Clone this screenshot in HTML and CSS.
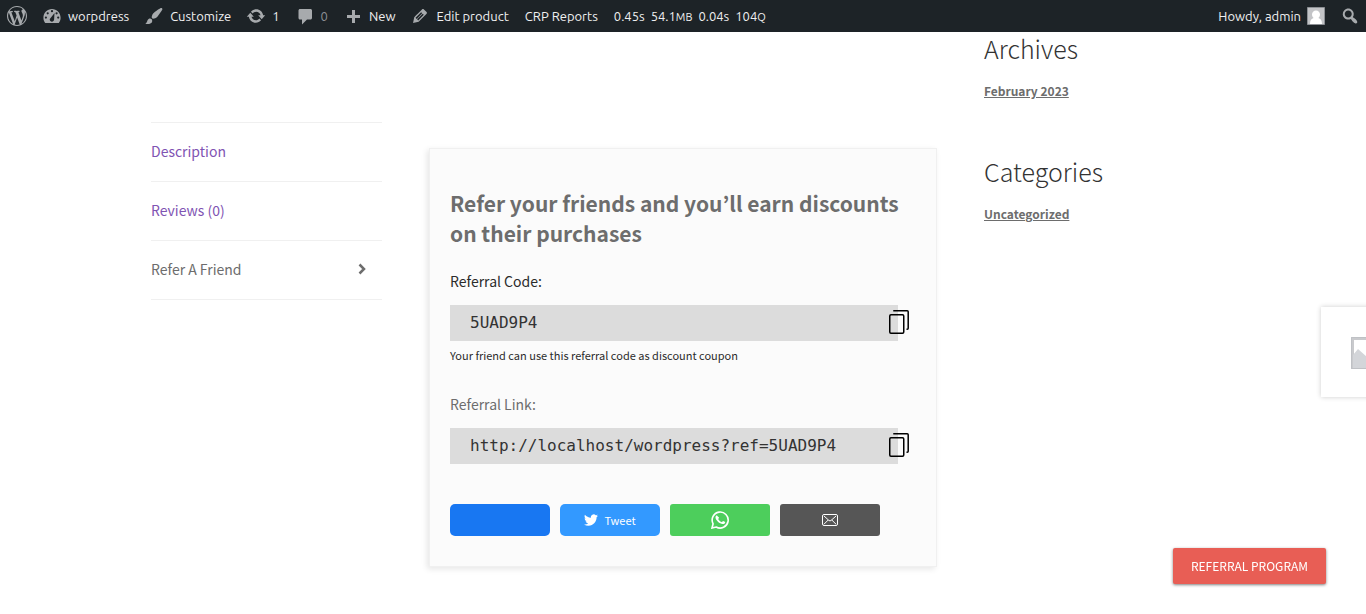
FILE: index.html
```
<!DOCTYPE html>
<html lang="en">
    <head>
        <meta charset="UTF-8" />
        <meta name="viewport" content="width=device-width, initial-scale=1.0" />
        <title>Product | worpdress</title>

        <link rel="stylesheet" href="styles.css">
    </head>
    <body>
        <nav class="adminbar">
            <a class="ab-item" href="#" aria-label="About WordPress">
                <svg class="ab-icon" viewBox="0 0 20 20"><path d="M20 10c0-5.51-4.49-10-10-10C4.48 0 0 4.49 0 10c0 5.52 4.48 10 10 10 5.51 0 10-4.48 10-10zM7.78 15.37L4.37 6.22c.55-.02 1.17-.08 1.17-.08.5-.06.44-1.13-.06-1.11 0 0-1.45.11-2.37.11-.18 0-.37 0-.58-.01C4.12 2.69 6.87 1.11 10 1.11c2.33 0 4.45.87 6.05 2.34-.68-.11-1.65.39-1.65 1.58 0 .74.45 1.36.9 2.1.35.61.55 1.36.55 2.46 0 1.49-1.4 5-1.4 5l-3.03-8.37c.54-.02.82-.17.82-.17.5-.05.44-1.25-.06-1.22 0 0-1.44.12-2.38.12-.87 0-2.33-.12-2.33-.12-.5-.03-.56 1.2-.06 1.22l.92.08 1.26 3.41zM17.41 10c.24-.64.74-1.87.43-4.25.7 1.29 1.05 2.71 1.05 4.25 0 3.29-1.73 6.24-4.4 7.78.97-2.59 1.94-5.2 2.92-7.78zM6.1 18.09C3.12 16.65 1.11 13.53 1.11 10c0-1.3.23-2.48.72-3.59C3.25 10.3 4.67 14.2 6.1 18.09zm4.03-6.63l2.58 6.98c-.86.29-1.76.45-2.71.45-.79 0-1.57-.11-2.29-.33.81-2.38 1.62-4.74 2.42-7.1z"/></svg>
            </a>
            <a class="ab-item" href="#">
                <svg class="ab-icon" viewBox="0 0 20 20"><path fill-rule="evenodd" d="M3.2 17h13.6c1.2-1.5 1.8-3.3 1.8-5.3C18.6 6.9 14.7 3 10 3s-8.6 3.9-8.6 8.7c0 2 .6 3.8 1.8 5.3zM10 4.1a1.1 1.1 0 1 1 0 2.2 1.1 1.1 0 0 1 0-2.2zM5.7 6.2a1.1 1.1 0 1 1 0 2.2 1.1 1.1 0 0 1 0-2.2zm8.9 0a1.1 1.1 0 1 1 0 2.2 1.1 1.1 0 0 1 0-2.2zM8.6 12l3.9-5-.4 6.5c0 1.200-1 2.200-2.200 2.200s-2.200-1-2.200-2.200c0-.6.4-1.100.9-1.500zM3.900 10.500a1.100 1.100 0 1 1 0 2.200 1.100 1.100 0 0 1 0-2.200zm12.300 0a1.100 1.100 0 1 1 0 2.200 1.100 1.100 0 0 1 0-2.200z"/></svg>
                <span>worpdress</span>
            </a>
            <a class="ab-item" href="#">
                <svg class="ab-icon" viewBox="0 0 20 20"><path d="M18.33 3.57s.27-.8-.31-1.36c-.53-.52-1.22-.24-1.22-.24-.61.3-5.76 3.47-7.67 5.57-.86.96-2.06 3.79-1.09 4.82.92.98 3.96-.17 4.79-1 2.06-2.06 5.21-7.17 5.5-7.79zM1.4 17.65c2.37-1.56 1.46-3.41 3.23-4.64.93-.65 2.22-.62 3.08.29.63.67.8 2.57-.16 3.46-1.57 1.45-4 1.55-6.15.89z"/></svg>
                <span>Customize</span>
            </a>
            <a class="ab-item" href="#">
                <svg class="ab-icon" viewBox="0 0 20 20"><path d="M10.2 3.28c3.53 0 6.43 2.61 6.92 6h2.08l-3.5 4-3.5-4h2.32c-.45-1.97-2.21-3.45-4.32-3.45-1.45 0-2.73.71-3.54 1.78L4.95 5.66C6.23 4.2 8.11 3.28 10.2 3.28zm-.4 13.44c-3.52 0-6.43-2.61-6.92-6H.8l3.5-4c1.17 1.33 2.33 2.67 3.5 4H5.48c.45 1.97 2.21 3.45 4.32 3.45 1.45 0 2.73-.71 3.54-1.78l1.71 1.95c-1.28 1.46-3.15 2.38-5.25 2.38z"/></svg>
                <span>1</span>
            </a>
            <a class="ab-item" href="#">
                <svg class="ab-icon" viewBox="0 0 20 20"><path d="M5 3h10.500c.8 0 1.500.7 1.500 1.500v7.500c0 .8-.7 1.500-1.500 1.500H12l-5 5v-5H5c-.8 0-1.500-.7-1.500-1.500V4.500C3.500 3.700 4.200 3 5 3z"/></svg>
                <span class="ab-muted">0</span>
            </a>
            <a class="ab-item" href="#">
                <svg class="ab-icon" viewBox="0 0 20 20"><path d="M17 9v3h-5v5H9v-5H4V9h5V4h3v5z"/></svg>
                <span>New</span>
            </a>
            <a class="ab-item" href="#">
                <svg class="ab-icon" viewBox="0 0 20 20"><path d="M13.89 3.39l2.71 2.72c.46.46.42 1.24.03 1.64l-8.01 8.02-5.56 1.16 1.16-5.58s7.6-7.63 7.99-8.03c.39-.39 1.22-.39 1.68.07zm-2.73 2.79l-5.59 5.61 1.11 1.11 5.54-5.65zm-2.97 8.23l5.58-5.6-1.07-1.08-5.59 5.6z"/></svg>
                <span>Edit product</span>
            </a>
            <a class="ab-item ab-text" href="#">CRP Reports</a>
            <a class="ab-item ab-text ab-stats" href="#">
                <span>0.45s</span>
                <span>54.1<small>MB</small></span>
                <span>0.04s</span>
                <span>104<small>Q</small></span>
            </a>
            <a class="ab-item ab-account" href="#">
                <span>Howdy, admin</span>
                <svg class="avatar" viewBox="0 0 18 18"><path fill="#c3c4c7" stroke="#8c8f94" d="M.5.5h17v17H.5z"/><path fill="#fff" d="M9 3.500c2.300 0 4 1.700 4 4 0 1.500-.7 2.700-1.600 3.400 2.100.5 3.600 2.300 3.600 6.100H3c0-3.800 1.500-5.600 3.600-6.100C5.700 10.200 5 9 5 7.500c0-2.300 1.700-4 4-4z"/></svg>
            </a>
            <a class="ab-item ab-search" href="#" aria-label="Search">
                <svg class="ab-icon" viewBox="0 0 20 20"><path d="M12.140 4.180c1.870 1.870 2.110 4.750.720 6.890.12.100.22.210.36.310.2.160.47.360.81.590.34.240.56.390.66.470.42.310.73.570.94.780.32.320.6.650.84 1 .25.350.44.690.59 1.040.14.350.21.680.18 1-.02.320-.14.590-.36.810s-.49.340-.81.360c-.31.020-.65-.04-.99-.19-.35-.14-.7-.34-1.040-.59-.35-.24-.68-.52-1-.84-.21-.21-.47-.52-.77-.93-.1-.13-.25-.35-.47-.66-.22-.32-.4-.57-.56-.78-.16-.2-.29-.35-.44-.5-2.070 1.090-4.690.760-6.440-.98-2.140-2.150-2.140-5.640 0-7.780 2.150-2.150 5.630-2.150 7.780 0zm-1.410 6.360c1.360-1.370 1.360-3.580 0-4.950-1.370-1.370-3.590-1.370-4.950 0-1.370 1.370-1.370 3.580 0 4.950 1.360 1.370 3.580 1.370 4.950 0z"/></svg>
            </a>
        </nav>

        <div class="page">
            <main class="product-tabs">
                <ul class="tabs">
                    <li><a href="#">Description</a></li>
                    <li><a href="#">Reviews (0)</a></li>
                    <li class="active">
                        <a href="#">Refer A Friend</a>
                        <svg class="chevron" viewBox="0 0 8 12"><path d="M1.500 1.500L6 6l-4.500 4.500"/></svg>
                    </li>
                </ul>

                <section class="referral-box">
                    <h2>Refer your friends and you’ll earn discounts on their purchases</h2>
                    <div class="field">
                        <label class="dark" for="refCode">Referral Code:</label>
                        <div class="copy-row">
                            <input type="text" id="refCode" value="5UAD9P4" readonly />
                            <button class="copy" type="button" aria-label="Copy code">
                                <svg viewBox="0 0 20 24"><rect x="0.750" y="4.750" width="14" height="18.500" rx="1.200"/><path d="M5 1.500V.8h13.200c.6 0 1 .4 1 1v16.400c0 .6-.4 1-1 1h-.7"/></svg>
                            </button>
                        </div>
                        <p class="hint">Your friend can use this referral code as discount coupon</p>
                    </div>
                    <div class="field">
                        <label for="refLink">Referral Link:</label>
                        <div class="copy-row">
                            <input type="text" id="refLink" value="http://localhost/wordpress?ref=5UAD9P4" readonly />
                            <button class="copy" type="button" aria-label="Copy link">
                                <svg viewBox="0 0 20 24"><rect x="0.750" y="4.750" width="14" height="18.500" rx="1.200"/><path d="M5 1.500V.8h13.200c.6 0 1 .4 1 1v16.400c0 .6-.4 1-1 1h-.7"/></svg>
                            </button>
                        </div>
                    </div>
                    <div class="share">
                        <a class="facebook" href="#" aria-label="Share on Facebook"></a>
                        <a class="twitter" href="#">
                            <svg viewBox="0 0 24 24"><path d="M23.953 4.570a10 10 0 0 1-2.825.775 4.958 4.958 0 0 0 2.163-2.723c-.951.555-2.005.959-3.127 1.184a4.920 4.920 0 0 0-8.384 4.482C7.690 8.095 4.067 6.130 1.640 3.162a4.822 4.822 0 0 0-.666 2.475c0 1.710.870 3.213 2.188 4.096a4.904 4.904 0 0 1-2.228-.616v.060a4.923 4.923 0 0 0 3.946 4.827 4.996 4.996 0 0 1-2.212.085 4.936 4.936 0 0 0 4.604 3.417 9.867 9.867 0 0 1-6.102 2.105c-.390 0-.779-.023-1.170-.067a13.995 13.995 0 0 0 7.557 2.209c9.053 0 13.998-7.496 13.998-13.985 0-.210 0-.420-.015-.630A9.935 9.935 0 0 0 24 4.590z"/></svg>
                            <span>Tweet</span>
                        </a>
                        <a class="whatsapp" href="#" aria-label="Share on WhatsApp">
                            <svg viewBox="0 0 18 18"><path class="line" d="M1 17l1.100-4.200A8 8 0 1 1 5.200 16z"/><path d="M6.300 4.600c-.2-.4-.4-.4-.7-.4-.5 0-1.500.7-1.500 2.200 0 1.400 1 2.700 1.200 2.900.2.200 2 3.200 5 4.300 2.400.9 2.900.6 3.400.5.600-.1 1.500-.8 1.700-1.500.1-.5.100-.9 0-1-.3-.3-1.900-1-2.200-1.100-.3 0-.4.100-.6.400-.3.400-.6.8-.8 1-.2.100-.4.100-.6 0-2-.9-3-2-3.800-3.400-.1-.2 0-.4.100-.6.300-.3.700-.8.700-1 .1-.2 0-.3 0-.4z" transform="translate(1 1) scale(.85)"/></svg>
                        </a>
                        <a class="email" href="#" aria-label="Share by email">
                            <svg viewBox="0 0 16 12"><rect x="0.500" y="0.500" width="15" height="11" rx="1.500"/><path d="M2 2l5 4.500c.6.5 1.400.5 2 0L14 2M2 10.200L6.200 6M14 10.200L9.800 6"/></svg>
                        </a>
                    </div>
                </section>
            </main>

            <aside class="sidebar">
                <div class="widget">
                    <h3>Archives</h3>
                    <a href="#">February 2023</a>
                </div>
                <div class="widget">
                    <h3>Categories</h3>
                    <a href="#">Uncategorized</a>
                </div>
            </aside>
        </div>

        <a class="next-product" href="#" aria-label="Next product">
            <svg viewBox="0 0 32 32"><path fill="#fff" stroke="#c9cacd" stroke-width="3" d="M1.500 1.500h29v29h-29z"/><path fill="#d3d5d9" d="M2 18l5-6 9 8 7-5 8 7v9H2z"/><path fill="none" stroke="#bfc1c5" d="M.5.5h31v31H.5z"/></svg>
        </a>
        <button class="referral-program" type="button">REFERRAL PROGRAM</button>
    </body>
</html>
```
FILE: styles.css
```
* {
    box-sizing: border-box;
}
body {
    margin: 0;
    background-color: #ffffff;
    font-family: "Noto Sans CJK KR", "Open Sans", sans-serif;
    font-size: 14px;
    line-height: 26px;
    color: #6d6d6d;
}

/* Admin bar */
.adminbar {
    position: sticky;
    top: 0;
    display: flex;
    height: 32px;
    background-color: #1d2327;
    font-family: Ubuntu, "Noto Sans", sans-serif;
    font-size: 13px;
    line-height: 32px;
}
.ab-item {
    display: flex;
    align-items: center;
    gap: 6px;
    padding: 0 8px 0 7px;
    color: #f0f0f1;
    text-decoration: none;
    white-space: nowrap;
}
.ab-icon {
    width: 20px;
    height: 20px;
    fill: #a7aaad;
}
.ab-muted {
    color: #8c8f94;
}
.ab-text {
    padding: 0 8px;
}
.ab-stats {
    align-items: baseline;
}
.ab-stats small {
    font-size: 11px;
    line-height: 1;
}
.ab-account {
    margin-left: auto;
}
.ab-search {
    padding-right: 6px;
}
.avatar {
    width: 18px;
    height: 18px;
}

/* Content */
.page {
    display: flex;
    gap: 47px;
    max-width: 1064px;
    margin: 0 auto;
    padding-bottom: 40px;
}
.product-tabs {
    flex: 1;
    display: flex;
    align-items: flex-start;
    gap: 47px;
    padding-top: 90px;
}
.tabs {
    width: 231px;
    margin: 0;
    padding: 0;
    list-style: none;
    border-top: 1px solid #f0f0f0;
}
.tabs li {
    display: flex;
    justify-content: space-between;
    align-items: center;
    padding: 15px 16px 17px 0;
    border-bottom: 1px solid #f0f0f0;
}
.tabs a {
    color: #7f54b3;
    text-decoration: none;
}
.tabs .active a {
    color: #6d6d6d;
}
.chevron {
    width: 8px;
    height: 12px;
    fill: none;
    stroke: #6d6d6d;
    stroke-width: 2.5;
}
.referral-box {
    flex: 1;
    margin-top: 26px;
    padding: 39px 20px 30px;
    background-color: #fbfbfb;
    border: 1px solid #f0f0f0;
    box-shadow: -2px 2px 6px rgba(0, 0, 0, 0.1);
}
.referral-box h2 {
    margin: 0 0 20px;
    font-size: 21px;
    line-height: 30px;
    font-weight: 600;
}
.field label {
    display: block;
    margin-bottom: 11px;
}
.field .dark {
    color: #2b2b2b;
}
.copy-row {
    display: flex;
    align-items: center;
}
.copy-row input {
    flex: 1;
    min-width: 0;
    height: 36px;
    padding: 0 20px 2px;
    border: none;
    background-color: #dcdcdc;
    color: #333333;
    font-family: "DejaVu Sans Mono", monospace;
    font-size: 16px;
}
.copy {
    display: flex;
    margin-left: -9px;
    padding: 0 7px 2px 0;
    border: none;
    background: none;
}
.copy svg {
    width: 20px;
    height: 24px;
    fill: none;
    stroke: #000000;
    stroke-width: 1.5;
}
.hint {
    margin: 4px 0 26px;
    font-size: 11px;
    line-height: 20px;
    color: #2b2b2b;
}
.share {
    display: flex;
    gap: 10px;
    margin-top: 40px;
}
.share a {
    display: flex;
    justify-content: center;
    align-items: center;
    gap: 6px;
    width: 100px;
    height: 32px;
    border-radius: 5px;
    color: #ffffff;
    font-size: 11px;
    text-decoration: none;
}
.share svg {
    fill: #ffffff;
}
.share .facebook {
    background-color: #1877f2;
}
.share .twitter {
    background-color: #3399ff;
}
.twitter svg {
    width: 14px;
    height: 14px;
}
.share .whatsapp {
    border-radius: 3px;
    background-color: #4dce5c;
}
.whatsapp svg {
    width: 18px;
    height: 18px;
}
.whatsapp .line {
    fill: none;
    stroke: #ffffff;
    stroke-width: 1.6;
}
.share .email {
    border-radius: 3px;
    background-color: #565656;
}
.email svg {
    width: 16px;
    height: 12px;
    fill: none;
    stroke: #ffffff;
}

/* Sidebar */
.sidebar {
    width: 231px;
}
.widget {
    margin-bottom: 49px;
}
.widget h3 {
    margin: 0 0 12px;
    font-size: 25px;
    line-height: 32px;
    font-weight: 300;
    color: #333333;
}
.widget a {
    display: block;
    font-size: 12px;
    line-height: 30px;
    font-weight: 600;
    color: #6d6d6d;
}

/* Floating elements */
.next-product {
    position: fixed;
    top: 307px;
    left: calc(100% - 45px);
    padding: 30px 30px 28px;
    background-color: #ffffff;
    box-shadow: 0 0 5px rgba(0, 0, 0, 0.2);
}
.next-product svg {
    display: block;
    width: 32px;
    height: 32px;
}
.referral-program {
    position: fixed;
    right: 40px;
    bottom: 30px;
    height: 36px;
    padding: 0 18px 2px;
    border: none;
    border-radius: 2px;
    background-color: #e85e55;
    box-shadow: 0 1px 3px rgba(0, 0, 0, 0.5);
    color: #ffffff;
    font-family: inherit;
    font-size: 12px;
}
```
